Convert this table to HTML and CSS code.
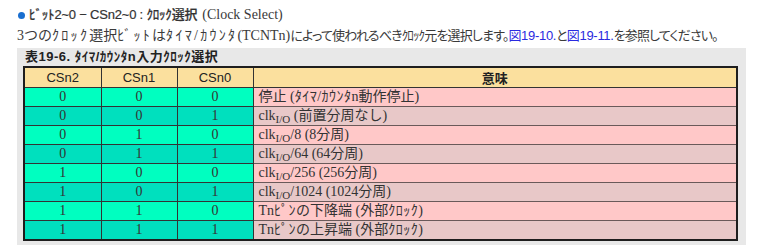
FILE: index.html
```html
<!DOCTYPE html>
<html lang="ja">
<head>
<meta charset="utf-8">
<link rel="stylesheet" href="styles.css">
</head>
<body>
<div class="page">
  <div class="heading"><span class="dot"></span><span class="hsans">ﾋﾞｯﾄ2~0 − CSn2~0 : ｸﾛｯｸ選択</span><span class="serif htail">(Clock Select)</span></div>
  <p class="desc"><span class="seg1">3つの<span class="hk">ｸﾛｯｸ</span>選択<span class="hk">ﾋﾞｯﾄ</span>は<span class="hk">ﾀｲﾏ/ｶｳﾝﾀ</span>(TCNTn)</span><span class="seg2">によって使われるべき<span class="hk2">ｸﾛｯｸ</span>元を選択します。<span class="link">図19-10.</span>と<span class="link">図19-11.</span>を参照してください。</span></p>
  <div class="box">
    <div class="caption">表19-6. ﾀｲﾏ/ｶｳﾝﾀn入力ｸﾛｯｸ選択</div>
    <table class="tbl">
      <colgroup><col class="c1"><col class="c2"><col class="c3"><col></colgroup>
      <thead>
        <tr><th>CSn2</th><th>CSn1</th><th>CSn0</th><th>意味</th></tr>
      </thead>
      <tbody>
        <tr class="odd"><td>0</td><td>0</td><td>0</td><td class="m">停止 (<span class="hk">ﾀｲﾏ/ｶｳﾝﾀ</span>n動作停止)</td></tr>
        <tr class="even"><td>0</td><td>0</td><td>1</td><td class="m">clk<sub>I/O</sub> (前置分周なし)</td></tr>
        <tr class="odd"><td>0</td><td>1</td><td>0</td><td class="m">clk<sub>I/O</sub>/8 (8分周)</td></tr>
        <tr class="even"><td>0</td><td>1</td><td>1</td><td class="m">clk<sub>I/O</sub>/64 (64分周)</td></tr>
        <tr class="odd"><td>1</td><td>0</td><td>0</td><td class="m">clk<sub>I/O</sub>/256 (256分周)</td></tr>
        <tr class="even"><td>1</td><td>0</td><td>1</td><td class="m">clk<sub>I/O</sub>/1024 (1024分周)</td></tr>
        <tr class="odd"><td>1</td><td>1</td><td>0</td><td class="m">Tn<span class="hk">ﾋﾟﾝ</span>の下降端 (外部<span class="hk">ｸﾛｯｸ</span>)</td></tr>
        <tr class="even"><td>1</td><td>1</td><td>1</td><td class="m">Tn<span class="hk">ﾋﾟﾝ</span>の上昇端 (外部<span class="hk">ｸﾛｯｸ</span>)</td></tr>
      </tbody>
    </table>
  </div>
</div>
</body>
</html>
```
FILE: styles.css
```css
html, body { margin: 0; padding: 0; background: #fff; }
.page {
  padding: 6px 0 0 17px;
  color: #3a3a3a;
  font-family: "Liberation Serif", "Noto Sans CJK JP", serif;
  font-size: 14px;
}
.heading {
  display: flex;
  align-items: center;
  height: 18px;
  line-height: 18px;
  white-space: pre;
}
.dot {
  width: 7px; height: 7px; border-radius: 50%;
  background: #1a6fd0;
  margin: 0 4px 0 1px;
}
.hsans {
  font-family: "Liberation Sans", "Noto Sans CJK JP", sans-serif;
  font-size: 13px;
  font-weight: 500;
  color: #333;
  letter-spacing: -0.2px;
  -webkit-text-stroke: 0.2px #333;
}
.htail { margin-left: 5px; }
.hk { letter-spacing: 0.5px; }
.seg1 .hk { letter-spacing: 2.3px; }
.serif { font-family: "Liberation Serif", "Noto Sans CJK JP", serif; }
.desc {
  margin: 2px 0 0 0;
  line-height: 20px;
  height: 20px;
  white-space: nowrap;
}
.seg2 { font-feature-settings: "palt"; font-size: 13px; letter-spacing: -0.85px; }
.link {
  font-family: "Liberation Sans", "Noto Sans CJK JP", sans-serif;
  color: #2a2ae0;
  letter-spacing: -0.3px;
}
.box {
  margin-top: 2px;
  width: 729px;
  height: 197px;
  background: #e8e8e8;
  padding: 0 0 0 6px;
  box-sizing: border-box;
}
.caption {
  font-family: "Liberation Sans", "Noto Sans CJK JP", sans-serif;
  font-weight: bold;
  font-size: 13px;
  line-height: 18px;
  height: 18px;
  padding-left: 2px;
  letter-spacing: 0.5px;
  color: #222;
}
.tbl {
  border-collapse: collapse;
  width: 715px;
  border: 2px solid #1e1e1e;
  table-layout: fixed;
}
.c1 { width: 77px; }
.c2 { width: 76px; }
.c3 { width: 76px; }
.tbl th {
  background: #fbe09e;
  font-family: "Liberation Sans", "Noto Sans CJK JP", sans-serif;
  font-weight: normal;
  font-size: 13px;
  height: 19px;
  padding: 0;
  border: 1px solid #333;
  color: #222;
}
.tbl th:last-child { font-weight: bold; }
.tbl td {
  height: 18px;
  padding: 0;
  text-align: center;
  border: 1px solid #333;
  line-height: 18px;
  color: #333;
  font-size: 14px;
}
.tbl tr.odd td { background: #00ffc0; }
.tbl tr.even td { background: #00e0be; }
.tbl tr.odd td.m { background: #ffc8c8; }
.tbl tr.even td.m { background: #e8c8c8; }
.tbl td.m {
  text-align: left;
  padding-left: 5px;
  border-bottom-color: #6a5a5a;
  border-top-color: #6a5a5a;
}
sub {
  font-size: 11px;
  vertical-align: -3px;
  line-height: 0;
}
```
